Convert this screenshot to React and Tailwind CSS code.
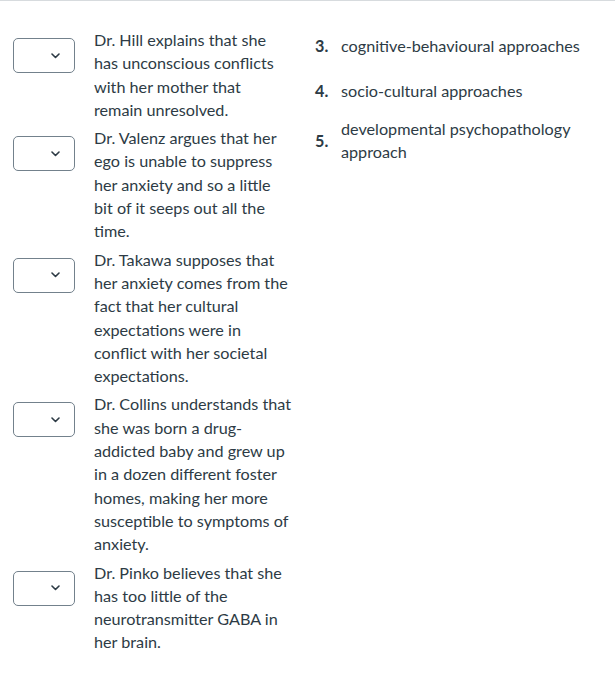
import React from 'react';

const statements = [
  'Dr. Hill explains that she has unconscious conflicts with her mother that remain unresolved.',
  'Dr. Valenz argues that her ego is unable to suppress her anxiety and so a little bit of it seeps out all the time.',
  'Dr. Takawa supposes that her anxiety comes from the fact that her cultural expectations were in conflict with her societal expectations.',
  'Dr. Collins understands that she was born a drug-addicted baby and grew up in a dozen different foster homes, making her more susceptible to symptoms of anxiety.',
  'Dr. Pinko believes that she has too little of the neurotransmitter GABA in her brain.',
];

const Chevron = () => (
  <svg width="9" height="6" viewBox="0 0 9 6" fill="none" stroke="#2d3b45" strokeWidth="1.6" strokeLinecap="round" strokeLinejoin="round">
    <polyline points="1,1 4.5,4.5 8,1" />
  </svg>
);

function Select() {
  return (
    <div className="mt-[10px] w-[62px] h-[35px] shrink-0 rounded-[5px] border border-[#73818c] bg-white flex items-center justify-end pr-[14px]">
      <Chevron />
    </div>
  );
}

export default function App() {
  return (
    <div className="w-[615px] h-[676px] bg-white border-t border-[#d7dbde] text-[#2d3b45] font-['Lato','Liberation_Sans',sans-serif] text-[16.2px] leading-[23.3px]">
      <div className="flex">
        {/* statements with dropdowns */}
        <div className="w-[302px] pt-[27px] pl-[13px] flex flex-col gap-[5px]">
          {statements.map((s) => (
            <div key={s} className="flex gap-[19px]">
              <Select />
              <p className="w-[199px]">{s}</p>
            </div>
          ))}
        </div>

        {/* answer options */}
        <ol className="pl-[13px] pt-[33px] w-[300px]">
          <li className="flex gap-[10px]">
            <span className="w-[16px] font-bold">3.</span>
            <span>cognitive-behavioural approaches</span>
          </li>
          <li className="flex gap-[10px] mt-[22px]">
            <span className="w-[16px] font-bold">4.</span>
            <span>socio-cultural approaches</span>
          </li>
          <li className="flex items-center gap-[10px] mt-[14px]">
            <span className="w-[16px] font-bold pt-[2px]">5.</span>
            <span className="w-[240px]">developmental psychopathology approach</span>
          </li>
        </ol>
      </div>
    </div>
  );
}
